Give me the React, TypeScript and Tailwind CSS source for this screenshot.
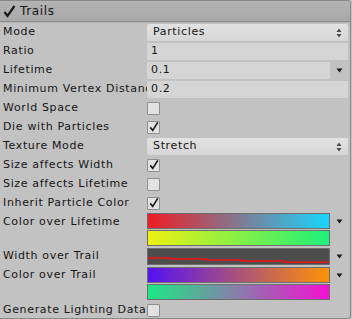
import React from "react";

const font = { fontFamily: '"DejaVu Sans", "Liberation Sans", sans-serif' };

function DownArrow() {
    return (
        <svg width="7" height="5" viewBox="0 0 7 5" className="shrink-0">
            <path d="M0.5 0.5 H6.5 L3.5 4.5 Z" fill="#1c1c1c" />
        </svg>
    );
}

function UpDown() {
    return (
        <svg width="6" height="10" viewBox="0 0 6 10" className="shrink-0">
            <path d="M3 0.5 L5.5 4 H0.5 Z" fill="#4a4a4a" />
            <path d="M3 9.5 L5.5 6 H0.5 Z" fill="#4a4a4a" />
        </svg>
    );
}

function Check({ on }: { on: boolean }) {
    return (
        <div className="w-[13px] h-[13px] border border-[#8f8f8f] bg-[#e2e2e2] rounded-[1px] flex items-center justify-center">
            {on && (
                <svg width="12" height="12" viewBox="0 0 12 12" className="-mt-[2px] ml-[1px]">
                    <path d="M1.5 6.5 L4.5 10 L10.5 0.5" fill="none" stroke="#1a1a1a" strokeWidth="2" />
                </svg>
            )}
        </div>
    );
}

function Row({ label, children }: { label: string; children?: React.ReactNode }) {
    return (
        <div className="flex items-center h-[19px]">
            <div className="w-[147px] shrink-0 pl-[3px] overflow-hidden whitespace-nowrap">{label}</div>
            {children}
        </div>
    );
}

function Popup({ value }: { value: string }) {
    return (
        <div className="flex items-center h-[17px] w-[201px] rounded-[2px] bg-gradient-to-b from-[#e2e2e2] to-[#d6d6d6] pl-[6px] pr-[6px]">
            <span className="flex-1">{value}</span>
            <UpDown />
        </div>
    );
}

function TextField({ value, arrow }: { value: string; arrow?: boolean }) {
    return (
        <div className="flex items-center">
            <div className={`flex items-center h-[17px] ${arrow ? "w-[183px]" : "w-[201px]"} bg-[#d5d5d5] pl-[4px]`}>
                {value}
            </div>
            {arrow && (
                <div className="w-[18px] flex justify-center">
                    <DownArrow />
                </div>
            )}
        </div>
    );
}

function Grad({ from, to }: { from: string; to: string }) {
    return (
        <div
            className="h-[16px] w-[183px] border border-[#6d6d6d]"
            style={{ background: `linear-gradient(to right, ${from}, ${to})` }}
        />
    );
}

export default function App() {
    return (
        <div className="w-[352px] h-[319px] bg-[#c2c2c2] text-[11px] tracking-[0.65px] text-[#151515] overflow-hidden" style={font}>
            <div className="w-[351px] h-[319px] border-r border-t border-b border-[#888888] rounded-tr-[3px] rounded-br-[4px]">
                {/* header */}
                <div className="h-[21px] flex items-center bg-gradient-to-b from-[#b3b3b3] to-[#a9a9a9] border-b border-[#8c8c8c] shadow-[0_1px_0_#b4b4b4] rounded-tr-[3px] text-[12px]">
                    <svg width="13" height="13" viewBox="0 0 13 13" className="ml-[3px] mr-[4px]">
                        <path d="M1.5 7 L4.5 11 L11.5 1" fill="none" stroke="#1a1a1a" strokeWidth="2.2" />
                    </svg>
                    <span>Trails</span>
                </div>

                <div className="pt-[1px]">
                    <Row label="Mode">
                        <Popup value="Particles" />
                    </Row>
                    <Row label="Ratio">
                        <TextField value="1" />
                    </Row>
                    <Row label="Lifetime">
                        <TextField value="0.1" arrow />
                    </Row>
                    <Row label="Minimum Vertex Distance">
                        <TextField value="0.2" />
                    </Row>
                    <Row label="World Space">
                        <Check on={false} />
                    </Row>
                    <Row label="Die with Particles">
                        <Check on />
                    </Row>
                    <Row label="Texture Mode">
                        <Popup value="Stretch" />
                    </Row>
                    <Row label="Size affects Width">
                        <Check on />
                    </Row>
                    <Row label="Size affects Lifetime">
                        <Check on={false} />
                    </Row>
                    <Row label="Inherit Particle Color">
                        <Check on />
                    </Row>

                    {/* Color over Lifetime */}
                    <div className="flex">
                        <div className="w-[147px] shrink-0 pl-[3px] h-[19px] flex items-center whitespace-nowrap">Color over Lifetime</div>
                        <div className="flex flex-col gap-[1px]">
                            <Grad from="#ee1c24" to="#16d6ff" />
                            <Grad from="#eef012" to="#1ef07a" />
                        </div>
                        <div className="w-[18px] h-[16px] flex items-center justify-center">
                            <DownArrow />
                        </div>
                    </div>

                    {/* Width over Trail */}
                    <div className="flex mt-[2px]">
                        <div className="w-[147px] shrink-0 pl-[3px] h-[17px] flex items-center whitespace-nowrap">Width over Trail</div>
                        <div className="h-[17px] w-[183px] border border-[#6d6d6d] bg-[#4d4d4d]">
                            <svg width="181" height="15" viewBox="0 0 181 15" className="block">
                                <path
                                    d="M0 9 L22 9 L22 10 L58 10 L58 11 L94 11 L94 12 L136 12 L136 13.2 L181 13.2"
                                    fill="none"
                                    stroke="#f01010"
                                    strokeWidth="1.5"
                                />
                            </svg>
                        </div>
                        <div className="w-[18px] h-[17px] flex items-center justify-center">
                            <DownArrow />
                        </div>
                    </div>

                    {/* Color over Trail */}
                    <div className="flex mt-[2px]">
                        <div className="w-[147px] shrink-0 pl-[3px] h-[17px] flex items-center whitespace-nowrap">Color over Trail</div>
                        <div className="flex flex-col gap-[1px]">
                            <Grad from="#5512f2" to="#ff9205" />
                            <Grad from="#1ee884" to="#f410d2" />
                        </div>
                        <div className="w-[18px] h-[16px] flex items-center justify-center">
                            <DownArrow />
                        </div>
                    </div>

                    <div className="mt-[1px]">
                        <Row label="Generate Lighting Data">
                            <Check on={false} />
                        </Row>
                    </div>
                </div>
            </div>
        </div>
    );
}
